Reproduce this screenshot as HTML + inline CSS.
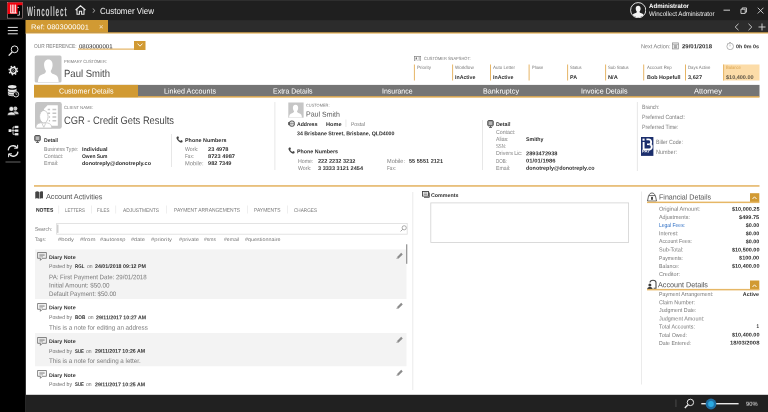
<!DOCTYPE html><html><head><meta charset="utf-8"><title>Wincollect - Customer View</title><style>
html,body{margin:0;padding:0;}body{width:768px;height:412px;overflow:hidden;background:#fff;position:relative;font-family:"Liberation Sans", sans-serif;}
#app{position:absolute;left:0;top:0;width:768px;height:412px;overflow:hidden;will-change:transform;}
#app>div,#app>svg{position:absolute;}
#app>span{position:absolute;white-space:nowrap;line-height:1;transform-origin:0 50%;}
#app>span.r{transform-origin:100% 50%;}
</style></head><body><div id="app">
<svg style="left:-1px;top:-1px" width="770" height="35"><rect x="1.00" y="1.00" width="768.00" height="33.00" fill="#1f1f1f"/></svg>
<svg style="left:-1px;top:19px" width="770" height="15"><rect x="1.00" y="1.20" width="768.00" height="12.30" fill="#2c2c2c"/></svg>
<svg style="left:-1px;top:19px" width="28" height="394"><rect x="1.00" y="1.00" width="25.80" height="392.00" fill="#000"/></svg>
<svg style="left:24px;top:19px" width="85" height="15"><rect x="1.50" y="1.00" width="82.50" height="12.50" fill="#d19a33"/></svg>
<svg style="left:24px;top:31px" width="745" height="4"><rect x="1.50" y="1.30" width="742.50" height="1.30" fill="#e3b159"/></svg>
<svg style="left:24px;top:393px" width="745" height="21"><rect x="1.40" y="1.80" width="742.60" height="17.40" fill="#212121"/></svg>
<svg style="left:7px;top:2.3px" width="16" height="16.4" viewBox="0 0 16 16.4"><rect x="0.25" y="0.25" width="15.5" height="15.9" fill="#050505" stroke="#d9b8b8" stroke-width="0.5"/><path d="M0.5 0.5 H15.5 V3.3 H10.6 V11.9 H0.5 Z" fill="#f4000c"/><path d="M3.7 2.6 V11 M5.3 2.6 V11 M6.9 2.6 V11 M8.6 2.6 V11 M3.4 11 H9.6" fill="none" stroke="#ffe9e9" stroke-width="1"/><path d="M10.4 5.4 H12 M12.4 9.2 V13.2 H10.2" fill="none" stroke="#eee" stroke-width="0.8"/></svg>
<svg style="left:-1px;top:-1px" width="770" height="3"><rect x="1.00" y="1.00" width="768.00" height="1.00" fill="#2e2e2e"/></svg>
<svg style="left:75px;top:5.2px" width="11" height="10" viewBox="0 0 11 10"><path d="M0.6 5 L5.5 0.8 L10.4 5 M2 4.2 V9.3 H4.4 V6.3 H6.6 V9.3 H9 V4.2" fill="none" stroke="#ececec" stroke-width="1.05"/></svg>
<svg style="left:630px;top:2px" width="16.4" height="16.4" viewBox="0 0 16.4 16.4"><defs><clipPath id="uc"><circle cx="8.2" cy="8.2" r="7.2"/></clipPath></defs><circle cx="8.2" cy="8.2" r="7.6" fill="#1f1f1f" stroke="#f2f2f2" stroke-width="0.9"/><g clip-path="url(#uc)"><path transform="translate(0.3,0.6) scale(0.57)" d="M13.8 5.5 C16.8 5.5 18.3 7.8 18.1 10.8 C17.9 13.2 17 14.8 16.3 15.6 C16.1 17.2 17 18 19.5 18.9 C22.8 20.1 24 21 24.3 28 H3.3 C3.6 21 4.8 20.1 8.1 18.9 C10.6 18 11.5 17.2 11.3 15.6 C10.6 14.8 9.7 13.2 9.5 10.8 C9.3 7.8 10.8 5.5 13.8 5.5Z" fill="#f4f4f4"/></g></svg>
<svg style="left:722px;top:8px" width="9" height="4"><rect x="1.50" y="1.70" width="6.50" height="0.90" fill="#e2e2e2"/></svg>
<svg style="left:740px;top:6.8px" width="7.4" height="7.4" viewBox="0 0 8 8"><path d="M1 2.4 H5.6 V7 H1 Z M2.4 2.4 V1 H7 V5.6 H5.6" fill="none" stroke="#e6e6e6" stroke-width="0.9"/></svg>
<svg style="left:757.2px;top:7px" width="7.2" height="7.2" viewBox="0 0 8 8"><path d="M0.8 0.8 L7.2 7.2 M7.2 0.8 L0.8 7.2" fill="none" stroke="#e6e6e6" stroke-width="0.9"/></svg>
<svg style="left:733px;top:22.5px" width="35" height="8" viewBox="0 0 35 8"><path d="M5.5 0.8 L2.2 4 L5.5 7.2 M15.5 0.8 L18.8 4 L15.5 7.2 M25.5 4 H32.5 M29 0.5 V7.5" fill="none" stroke="#d8d8d8" stroke-width="0.9"/></svg>
<svg style="left:0;top:20px" width="25.5" height="150" viewBox="0 0 25.5 150"><g stroke="#e8e8e8" fill="none" stroke-width="1"><path d="M7.8 7.4 H17.8 M7.8 10.6 H17.8 M7.8 13.8 H17.8"/><circle cx="14.6" cy="29.3" r="3.4"/><path d="M12.2 32 L8.7 35.6" stroke-width="1.3"/><circle cx="13.3" cy="50.5" r="2.9" stroke-width="1.5"/><circle cx="13.3" cy="50.5" r="4.2" stroke-dasharray="1.5 1.8" stroke-width="1.4"/><circle cx="13.3" cy="50.5" r="1" stroke-width="0.5"/></g><g fill="#e8e8e8"><ellipse cx="12.2" cy="66.8" rx="4.3" ry="1.7"/><path d="M7.9 68.2 V74.6 C7.9 76.8 16.5 76.8 16.5 74.6 V68.2 C16.5 70.3 7.9 70.3 7.9 68.2Z"/><path d="M7.9 71 C7.9 73 16.5 73 16.5 71 M7.9 73.4 C7.9 75.4 16.5 75.4 16.5 73.4" stroke="#000" stroke-width="0.5" fill="none"/><circle cx="16" cy="74.3" r="2.7" fill="#000" stroke="#e8e8e8" stroke-width="0.9"/><path d="M16 72.6 V74.3 H17.4" stroke="#e8e8e8" stroke-width="0.6" fill="none"/><circle cx="15.3" cy="88.6" r="2.1" fill="#c8c8c8"/><path d="M12 94.2 C12 90.4 18.6 90.4 18.6 94.2Z" fill="#c8c8c8"/><circle cx="11.4" cy="88.9" r="2.4" stroke="#000" stroke-width="0.5"/><path d="M7.4 95.2 C7.4 90.8 15.4 90.8 15.4 95.2Z" stroke="#000" stroke-width="0.5"/><rect x="8.6" y="109.2" width="2.8" height="2.8"/><rect x="14.8" y="105.8" width="3.6" height="2.3"/><rect x="14.8" y="109.5" width="3.6" height="2.3"/><rect x="14.8" y="113.1" width="3.6" height="2.3"/><path d="M11.4 110.6 H14.8 M13 107 V114.3 M13 107 H14.8 M13 114.3 H14.8" stroke="#e8e8e8" stroke-width="0.8" fill="none"/></g><g stroke="#ececec" fill="none" stroke-width="1.3"><path d="M8.3 130.4 A4.8 4.8 0 0 1 17 127.8 M17.9 131.6 A4.8 4.8 0 0 1 9.2 134.2"/><path d="M17.6 124.8 V128.2 H14.2 M8.6 137.2 V133.8 H12" stroke-width="1"/></g><path d="M5.5 142 H20.5" stroke="#808080" stroke-width="0.8"/></svg>
<svg style="left:77px;top:47px" width="58" height="4"><rect x="1.00" y="1.60" width="56.00" height="1.00" fill="#dfa646"/></svg>
<svg style="left:133px;top:40px" width="14" height="11"><rect x="1.00" y="1.00" width="11.50" height="9.00" fill="#d19a33"/></svg>
<svg style="left:136.8px;top:43.4px" width="6" height="4" viewBox="0 0 6 4"><path d="M0.5 0.6 L3 3.2 L5.5 0.6" fill="none" stroke="#fff" stroke-width="0.9"/></svg>
<svg style="left:672.2px;top:42.3px" width="7" height="7.4" viewBox="0 0 8 8" preserveAspectRatio="none"><rect x="0.5" y="1" width="7" height="6.5" fill="#f2f2f2" stroke="#8a8a8a" stroke-width="0.8"/><path d="M0.5 2.8 H7.5 M2.3 4.2 H5.7 M2.3 5.8 H5.7 M2.8 3.4 V6.8 M4 3.4 V6.8 M5.2 3.4 V6.8" stroke="#8a8a8a" stroke-width="0.6"/></svg>
<svg style="left:726.3px;top:42px" width="8" height="8" viewBox="0 0 8 8"><circle cx="4.2" cy="4.4" r="3.3" fill="none" stroke="#9a9a9a" stroke-width="0.7"/><path d="M4 2.6 V4.4 M3 0.5 H5 M1.3 1.5 L2 2.2" stroke="#9a9a9a" stroke-width="0.6" fill="none"/></svg>
<svg style="left:33px;top:54px" width="30" height="30"><rect x="1.70" y="1.50" width="26.80" height="27.00" fill="#c6c6c6" rx="1.5"/></svg>
<svg style="left:34.7px;top:55.5px" width="26.8" height="27" viewBox="0.26 2.2 27.2 24.7" preserveAspectRatio="none"><path d="M13.8 5.5 C16.8 5.5 18.3 7.8 18.1 10.8 C17.9 13.2 17 14.8 16.3 15.6 C16.1 17.2 17 18 19.5 18.9 C22.8 20.1 24 21 24.3 26 H3.3 C3.6 21 4.8 20.1 8.1 18.9 C10.6 18 11.5 17.2 11.3 15.6 C10.6 14.8 9.7 13.2 9.5 10.8 C9.3 7.8 10.8 5.5 13.8 5.5Z" fill="#fff"/></svg>
<svg style="left:414px;top:55.7px" width="7.2" height="5.6" viewBox="0 0 8 6" preserveAspectRatio="none"><rect x="0.4" y="0.4" width="7.2" height="5.2" fill="none" stroke="#777" stroke-width="0.7"/><circle cx="2.6" cy="2.3" r="0.9" fill="#777"/><path d="M1.2 4.8 C1.4 3.4 3.8 3.4 4 4.8 M5 1.8 H6.8 M5 3 H6.8 M5 4.2 H6.8" stroke="#777" stroke-width="0.5" fill="none"/></svg>
<svg style="left:722px;top:63px" width="39" height="19"><rect x="1.10" y="1.50" width="36.40" height="16.00" fill="#fcdca8"/></svg>
<svg style="left:412px;top:63px" width="4" height="19"><rect x="1.90" y="1.50" width="1.00" height="16.00" fill="#e6b566"/></svg>
<svg style="left:451px;top:63px" width="4" height="19"><rect x="1.10" y="1.50" width="1.00" height="16.00" fill="#e6b566"/></svg>
<svg style="left:489px;top:63px" width="3" height="19"><rect x="1.00" y="1.50" width="1.00" height="16.00" fill="#e6b566"/></svg>
<svg style="left:527px;top:63px" width="4" height="19"><rect x="1.60" y="1.50" width="1.00" height="16.00" fill="#e6b566"/></svg>
<svg style="left:566px;top:63px" width="4" height="19"><rect x="1.10" y="1.50" width="1.00" height="16.00" fill="#e6b566"/></svg>
<svg style="left:604px;top:63px" width="4" height="19"><rect x="1.10" y="1.50" width="1.00" height="16.00" fill="#e6b566"/></svg>
<svg style="left:642px;top:63px" width="4" height="19"><rect x="1.20" y="1.50" width="1.00" height="16.00" fill="#e6b566"/></svg>
<svg style="left:684px;top:63px" width="3" height="19"><rect x="1.00" y="1.50" width="1.00" height="16.00" fill="#e6b566"/></svg>
<svg style="left:722px;top:63px" width="4" height="19"><rect x="1.10" y="1.50" width="1.00" height="16.00" fill="#e6b566"/></svg>
<svg style="left:33px;top:83px" width="728" height="15"><rect x="1.00" y="1.90" width="725.50" height="11.80" fill="#757575"/></svg>
<svg style="left:33px;top:83px" width="106" height="16"><rect x="1.00" y="1.90" width="104.00" height="12.70" fill="#d19a33"/></svg>
<svg style="left:137px;top:95px" width="624" height="4"><rect x="1.00" y="1.20" width="621.50" height="1.40" fill="#dfa646"/></svg>
<svg style="left:34.8px;top:102.1px" width="26.8" height="26.8" viewBox="0 0 27 27"><rect x="0" y="0" width="27" height="27" rx="2.2" fill="#c5c5c5"/><path d="M9 7 L12.6 3.2 H23 V24 H9 Z" fill="#fff"/><path d="M12.8 7.6 H15.2 M17.6 7.6 H21.4 M12.8 11.3 H15.2 M17.6 11.3 H21.4 M14 15.1 H15.2 M17.6 15.1 H21.4 M14 18.9 H15.2 M17.6 18.9 H21.4" stroke="#c5c5c5" stroke-width="1.5"/><path d="M0.9 26.2 C1 22.8 2.4 21.8 5.6 21 H12.2 C15.4 21.8 16.8 22.8 16.9 26.2 Z" fill="#fff" stroke="#c5c5c5" stroke-width="0.8"/><ellipse cx="8.9" cy="14.8" rx="4.3" ry="6.3" fill="#fff" stroke="#c5c5c5" stroke-width="0.9"/><path d="M7 21.4 L8.9 25.6 L10.8 21.4" fill="none" stroke="#c5c5c5" stroke-width="0.8"/></svg>
<svg style="left:34.3px;top:135.2px" width="7" height="8" viewBox="0 0 7 8"><rect x="0.8" y="0.6" width="5.4" height="5.2" rx="0.7" fill="#9a9a9a" stroke="#484848" stroke-width="1"/><path d="M1.9 2.3 H5.1 M1.9 3.3 H5.1 M1.9 4.3 H5.1" stroke="#e4e4e4" stroke-width="0.45" fill="none"/><path d="M3.5 6 V7.3 M2 7.5 H5" stroke="#4a4a4a" stroke-width="0.8" fill="none"/></svg>
<svg style="left:170px;top:133px" width="3" height="35"><rect x="1.00" y="1.00" width="0.80" height="33.00" fill="#e2e2e2"/></svg>
<svg style="left:176px;top:135.8px" width="7" height="7" viewBox="0 0 7 7"><path d="M1.2 0.5 L2.4 0.4 L3 2 L2.2 2.7 C2.6 3.7 3.4 4.5 4.4 4.9 L5.1 4.1 L6.6 4.8 L6.5 5.9 C6 6.6 5.2 6.7 4.4 6.4 C2.6 5.7 1.3 4.4 0.6 2.6 C0.3 1.8 0.5 1 1.2 0.5Z" fill="#444"/></svg>
<svg style="left:273px;top:101px" width="4" height="70"><rect x="1.50" y="1.00" width="0.80" height="68.00" fill="#e2e2e2"/></svg>
<svg style="left:287px;top:101px" width="18" height="18"><rect x="1.30" y="1.50" width="15.30" height="15.20" fill="#c6c6c6"/></svg>
<svg style="left:288.3px;top:102.6px" width="15" height="15.2" viewBox="1.5 2.5 24.5 24.5" preserveAspectRatio="none"><path d="M13.8 5.5 C16.8 5.5 18.3 7.8 18.1 10.8 C17.9 13.2 17 14.8 16.3 15.6 C16.1 17.2 17 18 19.5 18.9 C22.8 20.1 24 21 24.3 26 H3.3 C3.6 21 4.8 20.1 8.1 18.9 C10.6 18 11.5 17.2 11.3 15.6 C10.6 14.8 9.7 13.2 9.5 10.8 C9.3 7.8 10.8 5.5 13.8 5.5Z" fill="#fff"/></svg>
<svg style="left:288px;top:119.9px" width="7.3" height="7.3" viewBox="0 0 8 8"><circle cx="4.3" cy="4" r="3.1" fill="none" stroke="#444" stroke-width="0.8"/><path d="M4.3 0.9 V7.1 M1.2 4 H7.4 M2.8 1.3 C2 3 2 5 2.8 6.7 M5.8 1.3 C6.6 3 6.6 5 5.8 6.7" stroke="#444" stroke-width="0.5" fill="none"/><rect x="0.3" y="2.2" width="1.4" height="3.4" fill="#444"/></svg>
<svg style="left:344px;top:118px" width="4" height="10"><rect x="1.60" y="1.50" width="0.70" height="7.50" fill="#e2e2e2"/></svg>
<svg style="left:288px;top:147px" width="7" height="7" viewBox="0 0 7 7"><path d="M1.2 0.5 L2.4 0.4 L3 2 L2.2 2.7 C2.6 3.7 3.4 4.5 4.4 4.9 L5.1 4.1 L6.6 4.8 L6.5 5.9 C6 6.6 5.2 6.7 4.4 6.4 C2.6 5.7 1.3 4.4 0.6 2.6 C0.3 1.8 0.5 1 1.2 0.5Z" fill="#444"/></svg>
<svg style="left:481px;top:119px" width="3" height="52"><rect x="1.00" y="1.00" width="0.80" height="50.00" fill="#e2e2e2"/></svg>
<svg style="left:486.9px;top:119.6px" width="7" height="8" viewBox="0 0 7 8"><rect x="0.8" y="0.6" width="5.4" height="5.2" rx="0.7" fill="#9a9a9a" stroke="#484848" stroke-width="1"/><path d="M1.9 2.3 H5.1 M1.9 3.3 H5.1 M1.9 4.3 H5.1" stroke="#e4e4e4" stroke-width="0.45" fill="none"/><path d="M3.5 6 V7.3 M2 7.5 H5" stroke="#4a4a4a" stroke-width="0.8" fill="none"/></svg>
<svg style="left:635px;top:101px" width="4" height="71"><rect x="1.90" y="1.00" width="0.80" height="69.00" fill="#e2e2e2"/></svg>
<svg style="left:641.2px;top:136.7px" width="12.4" height="18.9" viewBox="0 0 12.4 18.9"><rect width="12.4" height="18.9" fill="#1b2e6c"/><rect x="1.5" y="1.6" width="2.1" height="2.1" fill="#fff"/><path d="M2.6 5 V12.4 H8 C11.6 12.4 11.6 7.6 8.6 7.2 C11 6.6 10.6 2.4 7.6 2.4 H5.4" fill="none" stroke="#fff" stroke-width="1.9"/><path d="M6 7.3 H8.4" stroke="#fff" stroke-width="1.6"/></svg>
<svg style="left:33px;top:184px" width="728" height="4"><rect x="1.00" y="1.30" width="725.50" height="1.30" fill="#dfa646"/></svg>
<svg style="left:34.5px;top:191.3px" width="8.8" height="8.2" viewBox="0 0 10 9" preserveAspectRatio="none"><path d="M0.3 1 C1.8 0.2 3.4 0.2 4.7 1.1 V8.6 C3.4 7.8 1.8 7.8 0.3 8.5Z M9.7 1 C8.2 0.2 6.6 0.2 5.3 1.1 V8.6 C6.6 7.8 8.2 7.8 9.7 8.5Z" fill="#444"/></svg>
<svg style="left:57px;top:204px" width="4" height="11"><rect x="1.50" y="1.50" width="0.60" height="8.00" fill="#e4e4e4"/></svg>
<svg style="left:90px;top:204px" width="3" height="11"><rect x="1.00" y="1.50" width="0.60" height="8.00" fill="#e4e4e4"/></svg>
<svg style="left:114px;top:204px" width="4" height="11"><rect x="1.50" y="1.50" width="0.60" height="8.00" fill="#e4e4e4"/></svg>
<svg style="left:165px;top:204px" width="3" height="11"><rect x="1.00" y="1.50" width="0.60" height="8.00" fill="#e4e4e4"/></svg>
<svg style="left:246px;top:204px" width="3" height="11"><rect x="1.00" y="1.50" width="0.60" height="8.00" fill="#e4e4e4"/></svg>
<svg style="left:286px;top:204px" width="3" height="11"><rect x="1.00" y="1.50" width="0.60" height="8.00" fill="#e4e4e4"/></svg>
<svg style="left:55px;top:222px" width="354" height="14"><rect x="1.60" y="1.40" width="350.60" height="10.80" fill="#fff" stroke="#dcdcdc" stroke-width="0.8"/></svg>
<svg style="left:56px;top:223px" width="4" height="11"><rect x="1.60" y="1.60" width="0.60" height="8.30" fill="#8a8a8a"/></svg>
<svg style="left:400px;top:225px" width="7" height="7" viewBox="0 0 7 7"><circle cx="4.2" cy="2.8" r="2.1" fill="none" stroke="#888" stroke-width="0.7"/><path d="M2.7 4.3 L0.6 6.4" stroke="#888" stroke-width="0.8"/></svg>
<svg style="left:34px;top:248px" width="374" height="52"><rect x="1.00" y="1.40" width="371.50" height="49.60" fill="#f3f3f3"/></svg>
<svg style="left:34px;top:332px" width="374" height="36"><rect x="1.00" y="1.00" width="371.50" height="33.30" fill="#f3f3f3"/></svg>
<svg style="left:37.2px;top:252.3px" width="10" height="9" viewBox="0 0 10 9"><path d="M0.6 0.5 H9.4 V6.3 H5.4 L3.4 8.3 V6.3 H0.6 Z" fill="none" stroke="#555" stroke-width="0.7"/><path d="M2.3 2.3 H7.7 M2.3 3.6 H7.7 M2.3 4.9 H6" stroke="#555" stroke-width="0.5"/></svg>
<svg style="left:396.2px;top:251.5px" width="7.6" height="7.6" viewBox="0 0 7 7"><path d="M0.5 6.5 L1 4.6 L4.8 0.8 L6.2 2.2 L2.4 6 Z" fill="#8c8c8c"/><path d="M0.5 6.5 L1 4.6 L2.4 6Z" fill="#c4c4c4"/></svg>
<svg style="left:37.2px;top:302.9px" width="10" height="9" viewBox="0 0 10 9"><path d="M0.6 0.5 H9.4 V6.3 H5.4 L3.4 8.3 V6.3 H0.6 Z" fill="none" stroke="#555" stroke-width="0.7"/><path d="M2.3 2.3 H7.7 M2.3 3.6 H7.7 M2.3 4.9 H6" stroke="#555" stroke-width="0.5"/></svg>
<svg style="left:396.2px;top:302.1px" width="7.6" height="7.6" viewBox="0 0 7 7"><path d="M0.5 6.5 L1 4.6 L4.8 0.8 L6.2 2.2 L2.4 6 Z" fill="#8c8c8c"/><path d="M0.5 6.5 L1 4.6 L2.4 6Z" fill="#c4c4c4"/></svg>
<svg style="left:37.2px;top:336.59999999999997px" width="10" height="9" viewBox="0 0 10 9"><path d="M0.6 0.5 H9.4 V6.3 H5.4 L3.4 8.3 V6.3 H0.6 Z" fill="none" stroke="#555" stroke-width="0.7"/><path d="M2.3 2.3 H7.7 M2.3 3.6 H7.7 M2.3 4.9 H6" stroke="#555" stroke-width="0.5"/></svg>
<svg style="left:396.2px;top:335.8px" width="7.6" height="7.6" viewBox="0 0 7 7"><path d="M0.5 6.5 L1 4.6 L4.8 0.8 L6.2 2.2 L2.4 6 Z" fill="#8c8c8c"/><path d="M0.5 6.5 L1 4.6 L2.4 6Z" fill="#c4c4c4"/></svg>
<svg style="left:37.2px;top:370.2px" width="10" height="9" viewBox="0 0 10 9"><path d="M0.6 0.5 H9.4 V6.3 H5.4 L3.4 8.3 V6.3 H0.6 Z" fill="none" stroke="#555" stroke-width="0.7"/><path d="M2.3 2.3 H7.7 M2.3 3.6 H7.7 M2.3 4.9 H6" stroke="#555" stroke-width="0.5"/></svg>
<svg style="left:396.2px;top:369.40000000000003px" width="7.6" height="7.6" viewBox="0 0 7 7"><path d="M0.5 6.5 L1 4.6 L4.8 0.8 L6.2 2.2 L2.4 6 Z" fill="#8c8c8c"/><path d="M0.5 6.5 L1 4.6 L2.4 6Z" fill="#c4c4c4"/></svg>
<svg style="left:405px;top:243px" width="4" height="22"><rect x="1.10" y="1.30" width="1.20" height="19.50" fill="#8f8f8f"/></svg>
<svg style="left:411px;top:191px" width="4" height="200"><rect x="1.50" y="1.00" width="0.70" height="198.00" fill="#e2e2e2"/></svg>
<svg style="left:422px;top:190.5px" width="8" height="7" viewBox="0 0 8 7"><rect x="0.5" y="0.5" width="6" height="4.6" fill="#fff" stroke="#444" stroke-width="0.9"/><path d="M1.6 2 H5.4 M1.6 3.4 H5.4" stroke="#444" stroke-width="0.6"/><path d="M7.3 1.6 V6.3 H2" stroke="#444" stroke-width="0.9" fill="none"/></svg>
<svg style="left:429px;top:201px" width="201" height="43"><rect x="1.80" y="1.90" width="197.80" height="39.60" fill="#fff" stroke="#d2d2d2" stroke-width="0.8"/></svg>
<svg style="left:640px;top:190px" width="3" height="196"><rect x="1.10" y="1.50" width="0.70" height="193.00" fill="#e2e2e2"/></svg>
<svg style="left:646.5px;top:191.5px" width="10" height="10" viewBox="0 0 10 10"><path d="M2.2 3.4 C2.2 0.2 7.8 0.2 7.8 3.4 M1.6 3.6 H8.4 L9.5 9 H0.5 Z" fill="none" stroke="#444" stroke-width="0.8"/><rect x="4" y="4.9" width="2" height="2.9" fill="#505050"/></svg>
<svg style="left:749px;top:192px" width="12" height="12"><rect x="1.00" y="1.20" width="9.30" height="9.30" fill="#d19a33"/></svg>
<svg style="left:752.3px;top:196.2px" width="5" height="3.5" viewBox="0 0 5 3.5"><path d="M0.5 3 L2.5 0.8 L4.5 3" fill="none" stroke="#fff" stroke-width="0.9"/></svg>
<svg style="left:646px;top:200px" width="115" height="5"><rect x="1.00" y="1.60" width="112.30" height="1.50" fill="#e6b766"/></svg>
<svg style="left:647px;top:278.6px" width="10" height="10.4" viewBox="0 0 10 10.4"><path d="M3 3.6 C3 0.4 9 0.4 9 3.6 V9.2 H6.6" fill="none" stroke="#4a4a4a" stroke-width="1.1"/><circle cx="2.9" cy="6" r="1.5" fill="#3c3c3c"/><path d="M0.2 10.2 C0.2 7.3 5.6 7.3 5.6 10.2Z" fill="#3c3c3c"/></svg>
<svg style="left:749px;top:279px" width="12" height="12"><rect x="1.00" y="1.50" width="9.30" height="9.30" fill="#d19a33"/></svg>
<svg style="left:752.3px;top:283.5px" width="5" height="3.5" viewBox="0 0 5 3.5"><path d="M0.5 3 L2.5 0.8 L4.5 3" fill="none" stroke="#fff" stroke-width="0.9"/></svg>
<svg style="left:646px;top:287px" width="115" height="5"><rect x="1.00" y="1.90" width="112.30" height="1.50" fill="#e6b766"/></svg>
<svg style="left:674px;top:398px" width="4" height="10"><rect x="1.60" y="1.50" width="0.70" height="7.50" fill="#5a5a5a"/></svg>
<svg style="left:683.8px;top:398.2px" width="11" height="11" viewBox="0 0 11 11"><circle cx="6.4" cy="4.4" r="3.2" fill="none" stroke="#e8e8e8" stroke-width="1"/><path d="M4 6.8 L0.8 10" stroke="#e8e8e8" stroke-width="1.4"/></svg>
<svg style="left:700px;top:402px" width="40" height="4"><rect x="1.30" y="1.00" width="37.30" height="1.40" fill="#e8e8e8"/></svg>
<svg style="left:705.3px;top:397.7px" width="12" height="12" viewBox="0 0 12 12"><circle cx="6" cy="6" r="5.4" fill="#1f6fa3"/><circle cx="6" cy="6" r="2.9" fill="#2aaae2"/></svg>
<span style="top:4px;font-size:13.4px;color:#cdcdcd;font-weight:700;left:27.30px;transform:translateY(0.79px) rotate(0.03deg) scaleX(0.476);letter-spacing:1.8px;">Wincollect</span>
<span style="top:4px;font-size:11px;color:#9a9a9a;left:91.90px;transform:translateY(0.50px) rotate(0.03deg);">›</span>
<span style="top:6px;font-size:8.8px;color:#f4f4f4;left:100.00px;transform:translateY(0.93px) rotate(0.03deg) scaleX(0.908);">Customer View</span>
<span style="top:2px;font-size:6.37px;color:#fff;font-weight:700;left:649.00px;transform:translateY(0.96px) rotate(0.03deg) scaleX(0.959);">Administrator</span>
<span style="top:10px;font-size:6.7px;color:#f0f0f0;left:649.00px;transform:translateY(1.00px) rotate(0.03deg) scaleX(0.918);">Wincollect Administrator</span>
<span style="top:23px;font-size:7px;color:#fff;left:31.00px;transform:translateY(0.35px) rotate(0.03deg) scaleX(1.080);">Ref: 0803000001</span>
<span style="top:23px;font-size:7.5px;color:#f3e6cf;left:98.50px;transform:translateY(0.32px) rotate(0.03deg);">×</span>
<span style="top:43px;font-size:5.72px;color:#777;left:34.00px;transform:translateY(0.94px) rotate(0.03deg) scaleX(0.831);">OUR REFERENCE:</span>
<span style="top:44px;font-size:5.83px;color:#222;left:79.00px;transform:translateY(0.13px) rotate(0.03deg) scaleX(1.033);">0803000001</span>
<span style="top:44px;font-size:5.83px;color:#777;left:640.50px;transform:translateY(0.33px) rotate(0.03deg) scaleX(0.948);">Next Action:</span>
<span style="top:44px;font-size:5.83px;color:#303030;font-weight:700;left:682.00px;transform:translateY(0.36px) rotate(0.03deg) scaleX(1.028);">29/01/2018</span>
<span style="top:44px;font-size:5.29px;color:#303030;font-weight:700;left:735.50px;transform:translateY(0.27px) rotate(0.03deg) scaleX(1.017);">0h 0m 0s</span>
<span style="top:59px;font-size:4.54px;color:#777;left:64.00px;transform:translateY(0.74px) rotate(0.03deg) scaleX(0.880);">PRIMARY CUSTOMER:</span>
<span style="top:69px;font-size:10.4px;color:#474747;left:64.00px;transform:translateY(0.28px) rotate(0.03deg) scaleX(0.915);">Paul Smith</span>
<span style="top:57px;font-size:4.54px;color:#777;left:423.50px;transform:translateY(0.44px) rotate(0.03deg) scaleX(0.881);">CUSTOMER SNAPSHOT:</span>
<span style="top:65px;font-size:4.64px;color:#777;left:417.20px;transform:translateY(0.96px) rotate(0.03deg) scaleX(0.973);">Priority</span>
<span style="top:65px;font-size:4.64px;color:#777;left:455.40px;transform:translateY(0.96px) rotate(0.03deg) scaleX(0.987);">Workflow</span>
<span style="top:74px;font-size:5.4px;color:#303030;font-weight:700;left:455.40px;transform:translateY(0.96px) rotate(0.03deg) scaleX(0.972);">InActive</span>
<span style="top:65px;font-size:4.64px;color:#777;left:493.30px;transform:translateY(0.96px) rotate(0.03deg) scaleX(0.972);">Auto Letter</span>
<span style="top:74px;font-size:5.4px;color:#303030;font-weight:700;left:493.30px;transform:translateY(0.96px) rotate(0.03deg) scaleX(0.972);">InActive</span>
<span style="top:65px;font-size:4.64px;color:#777;left:531.90px;transform:translateY(0.96px) rotate(0.03deg) scaleX(0.853);">Phase</span>
<span style="top:65px;font-size:4.64px;color:#777;left:570.40px;transform:translateY(0.96px) rotate(0.03deg) scaleX(0.891);">Status</span>
<span style="top:74px;font-size:5.4px;color:#303030;font-weight:700;left:570.40px;transform:translateY(0.96px) rotate(0.03deg) scaleX(0.986);">PA</span>
<span style="top:65px;font-size:4.64px;color:#777;left:608.40px;transform:translateY(0.96px) rotate(0.03deg) scaleX(0.910);">Sub Status</span>
<span style="top:74px;font-size:5.4px;color:#303030;font-weight:700;left:608.40px;transform:translateY(0.96px) rotate(0.03deg) scaleX(1.054);">N/A</span>
<span style="top:65px;font-size:4.64px;color:#777;left:646.50px;transform:translateY(0.96px) rotate(0.03deg) scaleX(0.929);">Account Rep</span>
<span style="top:74px;font-size:5.4px;color:#303030;font-weight:700;left:646.50px;transform:translateY(0.96px) rotate(0.03deg) scaleX(0.999);">Bob Hopefull</span>
<span style="top:65px;font-size:4.64px;color:#777;left:688.30px;transform:translateY(0.96px) rotate(0.03deg) scaleX(0.931);">Days Active</span>
<span style="top:74px;font-size:5.4px;color:#303030;font-weight:700;left:688.30px;transform:translateY(0.96px) rotate(0.03deg) scaleX(1.037);">3,627</span>
<span style="top:65px;font-size:4.64px;color:#d9a24e;left:726.40px;transform:translateY(0.96px) rotate(0.03deg) scaleX(0.885);">Balance</span>
<span style="top:74px;font-size:5.4px;color:#5e5546;font-weight:700;left:726.40px;transform:translateY(0.96px) rotate(0.03deg) scaleX(1.023);">$10,400.00</span>
<span style="top:87px;font-size:7.3px;color:#fff;left:58.75px;transform:translateY(0.42px) rotate(0.03deg) scaleX(0.974);">Customer Details</span>
<span style="top:87px;font-size:7.3px;color:#fff;left:164.00px;transform:translateY(0.42px) rotate(0.03deg) scaleX(0.978);">Linked Accounts</span>
<span style="top:87px;font-size:7.3px;color:#fff;left:273.25px;transform:translateY(0.42px) rotate(0.03deg) scaleX(0.955);">Extra Details</span>
<span style="top:87px;font-size:7.3px;color:#fff;left:381.75px;transform:translateY(0.42px) rotate(0.03deg) scaleX(0.952);">Insurance</span>
<span style="top:87px;font-size:7.3px;color:#fff;left:482.50px;transform:translateY(0.42px) rotate(0.03deg) scaleX(0.986);">Bankruptcy</span>
<span style="top:87px;font-size:7.3px;color:#fff;left:580.75px;transform:translateY(0.42px) rotate(0.03deg) scaleX(0.980);">Invoice Details</span>
<span style="top:87px;font-size:7.3px;color:#fff;left:693.50px;transform:translateY(0.42px) rotate(0.03deg) scaleX(1.030);">Attorney</span>
<span style="top:106px;font-size:4.54px;color:#777;left:64.00px;transform:translateY(0.14px) rotate(0.03deg) scaleX(0.932);">CLIENT NAME:</span>
<span style="top:114px;font-size:10.8px;color:#474747;left:64.00px;transform:translateY(0.77px) rotate(0.03deg) scaleX(0.865);">CGR - Credit Gets Results</span>
<span style="top:138px;font-size:5.4px;color:#303030;font-weight:700;left:44.30px;transform:translateY(0.06px) rotate(0.03deg) scaleX(0.953);">Detail</span>
<span style="top:147px;font-size:5.83px;color:#808080;left:43.50px;transform:translateY(0.03px) rotate(0.03deg) scaleX(0.875);">Business Type:</span>
<span style="top:146px;font-size:5.4px;color:#303030;font-weight:700;left:82.00px;transform:translateY(0.96px) rotate(0.03deg) scaleX(1.013);">Individual</span>
<span style="top:154px;font-size:5.83px;color:#808080;left:43.50px;transform:translateY(0.08px) rotate(0.03deg) scaleX(0.898);">Contact:</span>
<span style="top:154px;font-size:5.4px;color:#303030;font-weight:700;left:82.00px;transform:translateY(0.01px) rotate(0.03deg) scaleX(0.915);">Owen Sum</span>
<span style="top:161px;font-size:5.83px;color:#808080;left:43.50px;transform:translateY(0.13px) rotate(0.03deg) scaleX(0.895);">Email:</span>
<span style="top:161px;font-size:5.4px;color:#303030;font-weight:700;left:82.00px;transform:translateY(0.06px) rotate(0.03deg) scaleX(1.009);">donotreply@donotreply.co</span>
<span style="top:138px;font-size:5.4px;color:#303030;font-weight:700;left:185.20px;transform:translateY(0.06px) rotate(0.03deg) scaleX(1.004);">Phone Numbers</span>
<span style="top:147px;font-size:5.83px;color:#808080;left:185.00px;transform:translateY(0.03px) rotate(0.03deg) scaleX(0.892);">Work:</span>
<span style="top:146px;font-size:5.4px;color:#303030;font-weight:700;left:207.50px;transform:translateY(0.96px) rotate(0.03deg) scaleX(1.051);">23 4978</span>
<span style="top:154px;font-size:5.83px;color:#808080;left:185.00px;transform:translateY(0.08px) rotate(0.03deg) scaleX(0.793);">Fax:</span>
<span style="top:154px;font-size:5.4px;color:#303030;font-weight:700;left:207.50px;transform:translateY(0.01px) rotate(0.03deg) scaleX(1.059);">8723 4987</span>
<span style="top:161px;font-size:5.83px;color:#808080;left:185.00px;transform:translateY(0.13px) rotate(0.03deg) scaleX(0.984);">Mobile:</span>
<span style="top:161px;font-size:5.4px;color:#303030;font-weight:700;left:207.50px;transform:translateY(0.06px) rotate(0.03deg) scaleX(1.045);">982 7349</span>
<span style="top:103px;font-size:4.21px;color:#777;left:306.00px;transform:translateY(0.76px) rotate(0.03deg) scaleX(0.934);">CUSTOMER:</span>
<span style="top:110px;font-size:7.3px;color:#585858;left:306.00px;transform:translateY(0.62px) rotate(0.03deg) scaleX(0.963);">Paul Smith</span>
<span style="top:121px;font-size:5.4px;color:#303030;font-weight:700;left:297.10px;transform:translateY(0.96px) rotate(0.03deg) scaleX(0.950);">Address</span>
<span style="top:121px;font-size:5.4px;color:#303030;font-weight:700;left:326.00px;transform:translateY(0.96px) rotate(0.03deg) scaleX(1.034);">Home</span>
<span style="top:121px;font-size:5.62px;color:#808080;left:351.00px;transform:translateY(0.97px) rotate(0.03deg) scaleX(0.898);">Postal</span>
<span style="top:131px;font-size:5.4px;color:#303030;font-weight:700;left:297.10px;transform:translateY(0.26px) rotate(0.03deg) scaleX(0.977);">34 Brisbane Street, Brisbane, QLD4000</span>
<span style="top:149px;font-size:5.4px;color:#303030;font-weight:700;left:297.30px;transform:translateY(0.16px) rotate(0.03deg) scaleX(0.992);">Phone Numbers</span>
<span style="top:158px;font-size:5.83px;color:#808080;left:297.50px;transform:translateY(0.93px) rotate(0.03deg) scaleX(0.902);">Home:</span>
<span style="top:158px;font-size:5.4px;color:#303030;font-weight:700;left:317.50px;transform:translateY(0.86px) rotate(0.03deg) scaleX(1.042);">222 2232 3232</span>
<span style="top:158px;font-size:5.83px;color:#808080;left:386.50px;transform:translateY(0.93px) rotate(0.03deg) scaleX(0.957);">Mobile:</span>
<span style="top:158px;font-size:5.4px;color:#303030;font-weight:700;left:409.00px;transform:translateY(0.86px) rotate(0.03deg) scaleX(1.031);">55 5551 2121</span>
<span style="top:166px;font-size:5.83px;color:#808080;left:297.50px;transform:translateY(0.13px) rotate(0.03deg) scaleX(0.892);">Work:</span>
<span style="top:166px;font-size:5.4px;color:#303030;font-weight:700;left:317.50px;transform:translateY(0.06px) rotate(0.03deg) scaleX(1.035);">3 3333 3121 2454</span>
<span style="top:166px;font-size:5.83px;color:#808080;left:386.50px;transform:translateY(0.13px) rotate(0.03deg) scaleX(0.793);">Fax:</span>
<span style="top:121px;font-size:5.4px;color:#303030;font-weight:700;left:496.30px;transform:translateY(0.96px) rotate(0.03deg) scaleX(0.987);">Detail</span>
<span style="top:129px;font-size:5.83px;color:#808080;left:495.80px;transform:translateY(0.93px) rotate(0.03deg) scaleX(0.898);">Contact:</span>
<span style="top:137px;font-size:5.83px;color:#808080;left:495.80px;transform:translateY(0.09px) rotate(0.03deg) scaleX(0.876);">Alias:</span>
<span style="top:137px;font-size:5.4px;color:#303030;font-weight:700;left:526.20px;transform:translateY(0.02px) rotate(0.03deg) scaleX(0.973);">Smithy</span>
<span style="top:144px;font-size:5.83px;color:#808080;left:495.80px;transform:translateY(0.25px) rotate(0.03deg) scaleX(0.735);">SSN:</span>
<span style="top:151px;font-size:5.83px;color:#808080;left:495.80px;transform:translateY(0.41px) rotate(0.03deg) scaleX(0.909);">Drivers Lic:</span>
<span style="top:151px;font-size:5.4px;color:#303030;font-weight:700;left:526.20px;transform:translateY(0.34px) rotate(0.03deg) scaleX(1.050);">2893472938</span>
<span style="top:158px;font-size:5.83px;color:#808080;left:495.80px;transform:translateY(0.57px) rotate(0.03deg) scaleX(0.772);">DOB:</span>
<span style="top:158px;font-size:5.4px;color:#303030;font-weight:700;left:526.20px;transform:translateY(0.50px) rotate(0.03deg) scaleX(1.093);">01/01/1986</span>
<span style="top:165px;font-size:5.83px;color:#808080;left:495.80px;transform:translateY(0.73px) rotate(0.03deg) scaleX(0.895);">Email:</span>
<span style="top:165px;font-size:5.4px;color:#303030;font-weight:700;left:526.20px;transform:translateY(0.66px) rotate(0.03deg) scaleX(1.002);">donotreply@donotreply.co</span>
<span style="top:104px;font-size:6.05px;color:#808080;left:641.50px;transform:translateY(0.13px) rotate(0.03deg) scaleX(0.839);">Branch:</span>
<span style="top:114px;font-size:6.05px;color:#808080;left:641.50px;transform:translateY(0.13px) rotate(0.03deg) scaleX(0.870);">Preferred Contact:</span>
<span style="top:124px;font-size:6.05px;color:#808080;left:641.50px;transform:translateY(0.23px) rotate(0.03deg) scaleX(0.876);">Preferred Time:</span>
<span style="top:149px;font-size:4.1px;color:#fff;font-weight:700;left:642.30px;transform:translateY(0.40px) rotate(0.03deg) scaleX(1.058);">PAY</span>
<span style="top:138px;font-size:6.05px;color:#808080;left:655.50px;transform:translateY(0.53px) rotate(0.03deg) scaleX(0.863);">Biller Code:</span>
<span style="top:149px;font-size:6.05px;color:#808080;left:655.50px;transform:translateY(0.13px) rotate(0.03deg) scaleX(0.906);">Number:</span>
<span style="top:193px;font-size:7.4px;color:#505050;left:46.00px;transform:translateY(0.11px) rotate(0.03deg) scaleX(0.982);">Account Activities</span>
<span style="top:207px;font-size:5.29px;color:#222;font-weight:700;left:35.60px;transform:translateY(0.67px) rotate(0.03deg) scaleX(0.950);">NOTES</span>
<span style="top:207px;font-size:5.29px;color:#777;left:64.50px;transform:translateY(0.63px) rotate(0.03deg) scaleX(0.841);">LETTERS</span>
<span style="top:207px;font-size:5.29px;color:#777;left:97.00px;transform:translateY(0.63px) rotate(0.03deg) scaleX(0.851);">FILES</span>
<span style="top:207px;font-size:5.29px;color:#777;left:122.50px;transform:translateY(0.63px) rotate(0.03deg) scaleX(0.922);">ADJUSTMENTS</span>
<span style="top:207px;font-size:5.29px;color:#777;left:173.50px;transform:translateY(0.63px) rotate(0.03deg) scaleX(0.937);">PAYMENT ARRANGEMENTS</span>
<span style="top:207px;font-size:5.29px;color:#777;left:254.00px;transform:translateY(0.63px) rotate(0.03deg) scaleX(0.937);">PAYMENTS</span>
<span style="top:207px;font-size:5.29px;color:#777;left:293.50px;transform:translateY(0.63px) rotate(0.03deg) scaleX(0.880);">CHARGES</span>
<span style="top:226px;font-size:5.29px;color:#777;left:34.50px;transform:translateY(0.83px) rotate(0.03deg) scaleX(0.934);">Search:</span>
<span style="top:238px;font-size:4.97px;color:#777;left:34.80px;transform:translateY(0.03px) rotate(0.03deg) scaleX(0.929);">Tags:</span>
<span style="top:238px;font-size:4.97px;color:#777;left:57.50px;transform:translateY(0.03px) rotate(0.03deg) scaleX(1.185);">#body</span>
<span style="top:238px;font-size:4.97px;color:#777;left:79.50px;transform:translateY(0.03px) rotate(0.03deg) scaleX(1.223);">#from</span>
<span style="top:238px;font-size:4.97px;color:#777;left:100.00px;transform:translateY(0.03px) rotate(0.03deg) scaleX(1.157);">#autoresp</span>
<span style="top:238px;font-size:4.97px;color:#777;left:131.00px;transform:translateY(0.03px) rotate(0.03deg) scaleX(1.128);">#date</span>
<span style="top:238px;font-size:4.97px;color:#777;left:151.00px;transform:translateY(0.03px) rotate(0.03deg) scaleX(1.191);">#priority</span>
<span style="top:238px;font-size:4.97px;color:#777;left:178.50px;transform:translateY(0.03px) rotate(0.03deg) scaleX(1.135);">#private</span>
<span style="top:238px;font-size:4.97px;color:#777;left:203.50px;transform:translateY(0.03px) rotate(0.03deg) scaleX(1.013);">#sms</span>
<span style="top:238px;font-size:4.97px;color:#777;left:223.50px;transform:translateY(0.03px) rotate(0.03deg) scaleX(1.028);">#email</span>
<span style="top:238px;font-size:4.97px;color:#777;left:245.20px;transform:translateY(0.03px) rotate(0.03deg) scaleX(1.092);">#questionnaire</span>
<span style="top:254px;font-size:5.18px;color:#333;font-weight:700;left:49.00px;transform:translateY(0.88px) rotate(0.03deg) scaleX(1.028);">Diary Note</span>
<span style="top:263px;font-size:5.62px;color:#707070;left:49.00px;transform:translateY(0.97px) rotate(0.03deg) scaleX(0.922);">Posted by</span>
<span style="top:263px;font-size:5.29px;color:#303030;font-weight:700;left:74.70px;transform:translateY(0.97px) rotate(0.03deg) scaleX(0.842);">RGL</span>
<span style="top:263px;font-size:5.62px;color:#707070;left:86.90px;transform:translateY(0.97px) rotate(0.03deg) scaleX(0.896);">on</span>
<span style="top:263px;font-size:5.29px;color:#303030;font-weight:700;left:94.90px;transform:translateY(0.97px) rotate(0.03deg) scaleX(1.004);">24/01/2018 09:12 PM</span>
<span style="top:274px;font-size:6.48px;color:#7a7a7a;left:49.00px;transform:translateY(0.30px) rotate(0.03deg) scaleX(0.947);">PA: First Payment Date: 29/01/2018</span>
<span style="top:282px;font-size:6.48px;color:#7a7a7a;left:49.00px;transform:translateY(0.50px) rotate(0.03deg) scaleX(0.974);">Initial Amount: $50.00</span>
<span style="top:290px;font-size:6.48px;color:#7a7a7a;left:49.00px;transform:translateY(1.00px) rotate(0.03deg) scaleX(0.944);">Default Payment: $50.00</span>
<span style="top:305px;font-size:5.18px;color:#333;font-weight:700;left:49.00px;transform:translateY(0.18px) rotate(0.03deg) scaleX(1.028);">Diary Note</span>
<span style="top:315px;font-size:5.62px;color:#707070;left:49.00px;transform:translateY(0.17px) rotate(0.03deg) scaleX(0.922);">Posted by</span>
<span style="top:315px;font-size:5.29px;color:#303030;font-weight:700;left:74.70px;transform:translateY(0.17px) rotate(0.03deg) scaleX(0.876);">BOB</span>
<span style="top:315px;font-size:5.62px;color:#707070;left:87.80px;transform:translateY(0.17px) rotate(0.03deg) scaleX(0.896);">on</span>
<span style="top:315px;font-size:5.29px;color:#303030;font-weight:700;left:95.80px;transform:translateY(0.17px) rotate(0.03deg) scaleX(0.990);">29/11/2017 10:27 AM</span>
<span style="top:324px;font-size:6.48px;color:#7a7a7a;left:49.00px;transform:translateY(0.70px) rotate(0.03deg) scaleX(0.964);">This is a note for editing an address</span>
<span style="top:338px;font-size:5.18px;color:#333;font-weight:700;left:49.00px;transform:translateY(0.98px) rotate(0.03deg) scaleX(1.028);">Diary Note</span>
<span style="top:348px;font-size:5.62px;color:#707070;left:49.00px;transform:translateY(0.67px) rotate(0.03deg) scaleX(0.922);">Posted by</span>
<span style="top:348px;font-size:5.29px;color:#303030;font-weight:700;left:74.70px;transform:translateY(0.67px) rotate(0.03deg) scaleX(0.819);">SUE</span>
<span style="top:348px;font-size:5.62px;color:#707070;left:86.40px;transform:translateY(0.67px) rotate(0.03deg) scaleX(0.896);">on</span>
<span style="top:348px;font-size:5.29px;color:#303030;font-weight:700;left:94.90px;transform:translateY(0.67px) rotate(0.03deg) scaleX(0.990);">29/11/2017 10:26 AM</span>
<span style="top:357px;font-size:6.48px;color:#7a7a7a;left:49.00px;transform:translateY(1.00px) rotate(0.03deg) scaleX(0.963);">This is a note for sending a letter.</span>
<span style="top:372px;font-size:5.18px;color:#333;font-weight:700;left:49.00px;transform:translateY(0.88px) rotate(0.03deg) scaleX(1.028);">Diary Note</span>
<span style="top:382px;font-size:5.62px;color:#707070;left:49.00px;transform:translateY(0.27px) rotate(0.03deg) scaleX(0.922);">Posted by</span>
<span style="top:382px;font-size:5.29px;color:#303030;font-weight:700;left:74.70px;transform:translateY(0.27px) rotate(0.03deg) scaleX(0.819);">SUE</span>
<span style="top:382px;font-size:5.62px;color:#707070;left:86.40px;transform:translateY(0.27px) rotate(0.03deg) scaleX(0.896);">on</span>
<span style="top:382px;font-size:5.29px;color:#303030;font-weight:700;left:94.90px;transform:translateY(0.27px) rotate(0.03deg) scaleX(0.990);">29/11/2017 10:25 AM</span>
<span style="top:193px;font-size:5.29px;color:#303030;font-weight:700;left:431.00px;transform:translateY(0.07px) rotate(0.03deg) scaleX(1.007);">Comments</span>
<span style="top:193px;font-size:7.4px;color:#505050;left:658.60px;transform:translateY(0.51px) rotate(0.03deg) scaleX(0.959);">Financial Details</span>
<span style="top:206px;font-size:5.72px;color:#777;left:658.50px;transform:translateY(0.84px) rotate(0.03deg) scaleX(0.981);">Original Amount:</span>
<span class="r" style="top:206px;font-size:5.29px;color:#303030;font-weight:700;right:8.70px;transform:translateY(0.77px) rotate(0.03deg) scaleX(1.040);">$10,000.25</span>
<span style="top:214px;font-size:5.72px;color:#777;left:658.50px;transform:translateY(0.97px) rotate(0.03deg) scaleX(0.938);">Adjustments:</span>
<span class="r" style="top:214px;font-size:5.29px;color:#303030;font-weight:700;right:8.70px;transform:translateY(0.90px) rotate(0.03deg) scaleX(1.047);">$499.75</span>
<span style="top:223px;font-size:5.72px;color:#2f6fc4;left:658.50px;transform:translateY(0.10px) rotate(0.03deg) scaleX(0.870);">Legal Fees:</span>
<span class="r" style="top:223px;font-size:5.29px;color:#303030;font-weight:700;right:8.70px;transform:translateY(0.03px) rotate(0.03deg) scaleX(1.021);">$0.00</span>
<span style="top:231px;font-size:5.72px;color:#777;left:658.50px;transform:translateY(0.23px) rotate(0.03deg) scaleX(0.943);">Interest:</span>
<span class="r" style="top:231px;font-size:5.29px;color:#303030;font-weight:700;right:8.70px;transform:translateY(0.16px) rotate(0.03deg) scaleX(1.021);">$0.00</span>
<span style="top:239px;font-size:5.72px;color:#777;left:658.50px;transform:translateY(0.36px) rotate(0.03deg) scaleX(0.902);">Account Fees:</span>
<span class="r" style="top:239px;font-size:5.29px;color:#303030;font-weight:700;right:8.70px;transform:translateY(0.29px) rotate(0.03deg) scaleX(1.021);">$0.00</span>
<span style="top:247px;font-size:5.72px;color:#777;left:658.50px;transform:translateY(0.49px) rotate(0.03deg) scaleX(0.951);">Sub-Total:</span>
<span class="r" style="top:247px;font-size:5.29px;color:#303030;font-weight:700;right:8.70px;transform:translateY(0.42px) rotate(0.03deg) scaleX(1.040);">$10,500.00</span>
<span style="top:255px;font-size:5.72px;color:#777;left:658.50px;transform:translateY(0.62px) rotate(0.03deg) scaleX(0.888);">Payments:</span>
<span class="r" style="top:255px;font-size:5.29px;color:#303030;font-weight:700;right:8.70px;transform:translateY(0.55px) rotate(0.03deg) scaleX(1.047);">$100.00</span>
<span style="top:263px;font-size:5.72px;color:#777;left:658.50px;transform:translateY(0.75px) rotate(0.03deg) scaleX(0.921);">Balance:</span>
<span class="r" style="top:263px;font-size:5.29px;color:#303030;font-weight:700;right:8.70px;transform:translateY(0.68px) rotate(0.03deg) scaleX(1.040);">$10,400.00</span>
<span style="top:271px;font-size:5.72px;color:#777;left:658.50px;transform:translateY(0.88px) rotate(0.03deg) scaleX(0.957);">Creditor:</span>
<span style="top:281px;font-size:7.4px;color:#505050;left:658.40px;transform:translateY(0.21px) rotate(0.03deg) scaleX(0.973);">Account Details</span>
<span style="top:292px;font-size:5.72px;color:#777;left:658.50px;transform:translateY(0.14px) rotate(0.03deg) scaleX(0.932);">Payment Arrangement:</span>
<span class="r" style="top:292px;font-size:5.29px;color:#303030;font-weight:700;right:8.70px;transform:translateY(0.07px) rotate(0.03deg) scaleX(1.009);">Active</span>
<span style="top:300px;font-size:5.72px;color:#777;left:658.50px;transform:translateY(0.22px) rotate(0.03deg) scaleX(0.944);">Claim Number:</span>
<span style="top:308px;font-size:5.72px;color:#777;left:658.50px;transform:translateY(0.30px) rotate(0.03deg) scaleX(0.929);">Judgment Date:</span>
<span style="top:316px;font-size:5.72px;color:#777;left:658.50px;transform:translateY(0.38px) rotate(0.03deg) scaleX(0.954);">Judgment Amount:</span>
<span style="top:324px;font-size:5.72px;color:#777;left:658.50px;transform:translateY(0.46px) rotate(0.03deg) scaleX(0.936);">Total Accounts:</span>
<span class="r" style="top:324px;font-size:5.29px;color:#303030;font-weight:700;right:8.70px;transform:translateY(0.39px) rotate(0.03deg) scaleX(0.850);">1</span>
<span style="top:332px;font-size:5.72px;color:#777;left:658.50px;transform:translateY(0.54px) rotate(0.03deg) scaleX(0.927);">Total Owed:</span>
<span class="r" style="top:332px;font-size:5.29px;color:#303030;font-weight:700;right:8.70px;transform:translateY(0.47px) rotate(0.03deg) scaleX(1.040);">$10,400.00</span>
<span style="top:340px;font-size:5.72px;color:#777;left:658.50px;transform:translateY(0.62px) rotate(0.03deg) scaleX(0.907);">Date Entered:</span>
<span class="r" style="top:340px;font-size:5.29px;color:#303030;font-weight:700;right:8.70px;transform:translateY(0.55px) rotate(0.03deg) scaleX(1.116);">18/03/2008</span>
<span style="top:401px;font-size:5.62px;color:#e8e8e8;left:746.00px;transform:translateY(0.77px) rotate(0.03deg) scaleX(1.023);">90%</span>
</div></body></html>
